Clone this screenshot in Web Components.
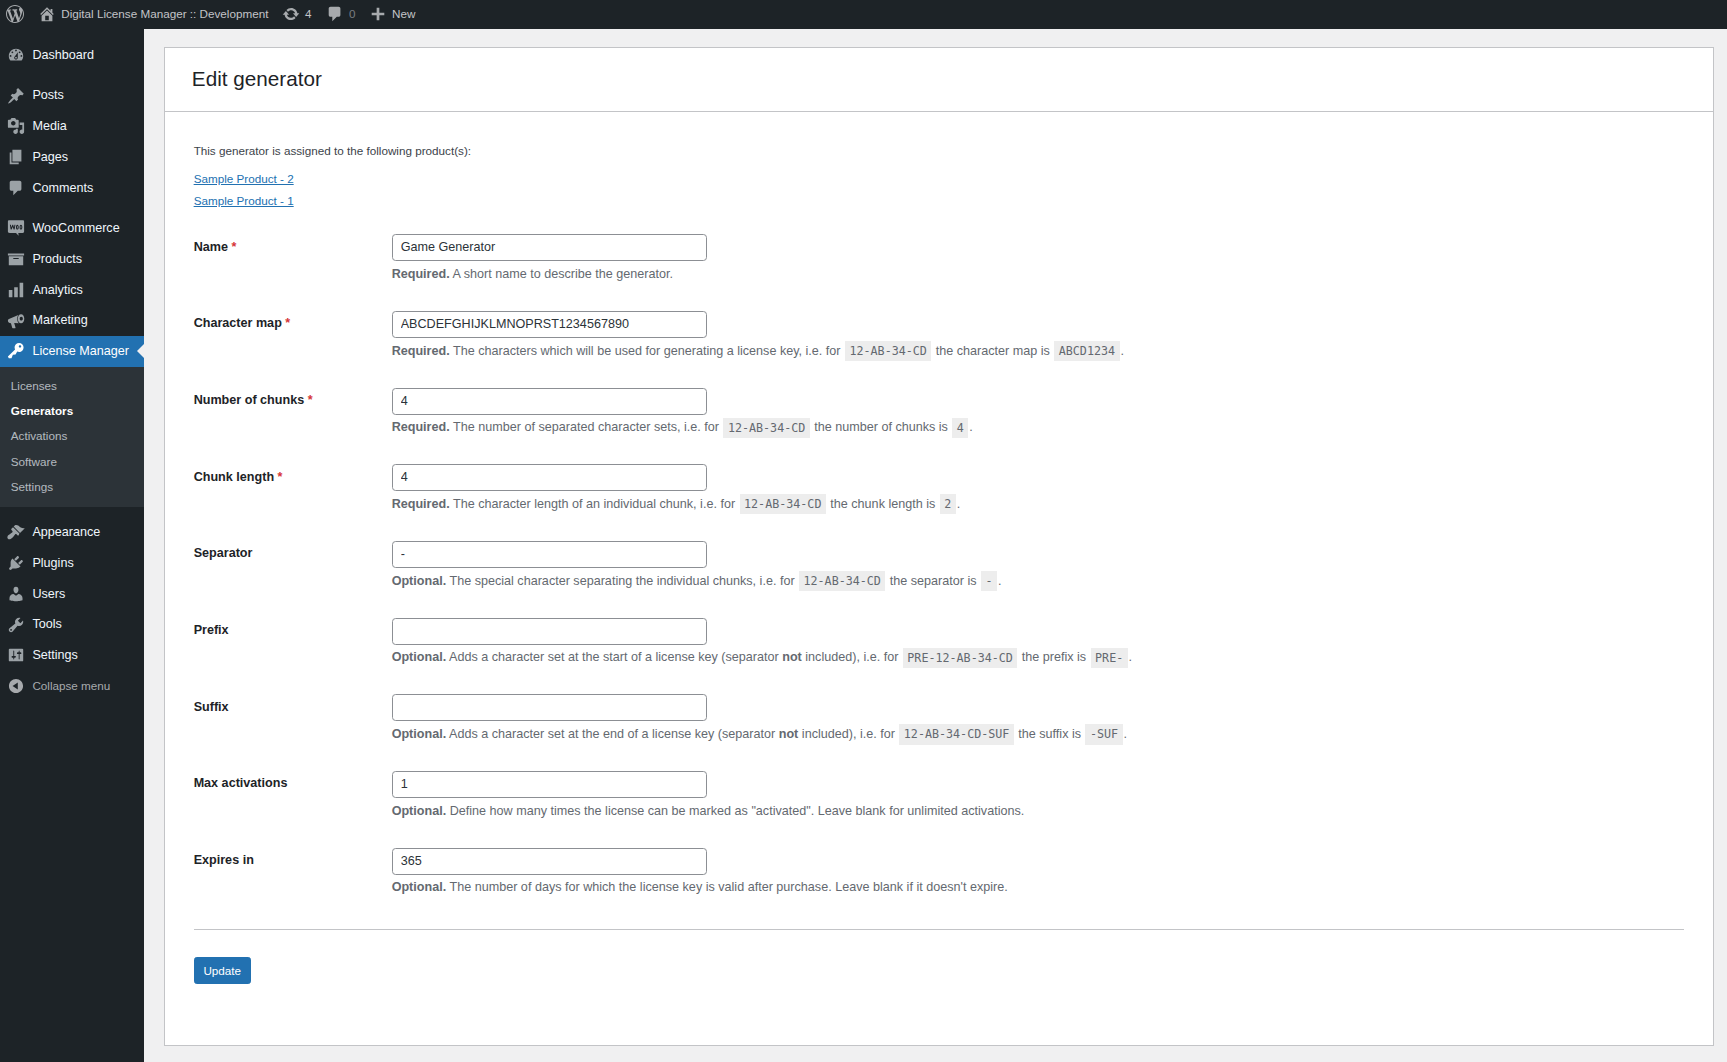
<!DOCTYPE html>
<html lang="en">
<head>
<meta charset="utf-8">
<title>Edit generator</title>
<style>
    body {
        margin: 0;
        background: #f0f0f1;
        font-family: "Liberation Sans", Arial, sans-serif;
        font-size: 11.7px;
        color: #3c434a;
    }
</style>
</head>
<body>
<wp-shell>
    <wp-admin-bar slot="bar" site="Digital License Manager :: Development" updates="4" comments="0"></wp-admin-bar>
    <wp-side-menu slot="menu">
        <wp-menu-item icon="dashboard">Dashboard</wp-menu-item>
        <wp-menu-sep></wp-menu-sep>
        <wp-menu-item icon="pin">Posts</wp-menu-item>
        <wp-menu-item icon="media">Media</wp-menu-item>
        <wp-menu-item icon="page">Pages</wp-menu-item>
        <wp-menu-item icon="comments">Comments</wp-menu-item>
        <wp-menu-sep></wp-menu-sep>
        <wp-menu-item icon="woo">WooCommerce</wp-menu-item>
        <wp-menu-item icon="archive">Products</wp-menu-item>
        <wp-menu-item icon="chart">Analytics</wp-menu-item>
        <wp-menu-item icon="megaphone">Marketing</wp-menu-item>
        <wp-menu-item icon="key" current>License Manager</wp-menu-item>
        <wp-sub-menu>
            <wp-sub-item>Licenses</wp-sub-item>
            <wp-sub-item current>Generators</wp-sub-item>
            <wp-sub-item>Activations</wp-sub-item>
            <wp-sub-item>Software</wp-sub-item>
            <wp-sub-item>Settings</wp-sub-item>
        </wp-sub-menu>
        <wp-menu-sep></wp-menu-sep>
        <wp-menu-item icon="appearance">Appearance</wp-menu-item>
        <wp-menu-item icon="plugins">Plugins</wp-menu-item>
        <wp-menu-item icon="users">Users</wp-menu-item>
        <wp-menu-item icon="tools">Tools</wp-menu-item>
        <wp-menu-item icon="settings">Settings</wp-menu-item>
        <wp-menu-item icon="collapse" small>Collapse menu</wp-menu-item>
    </wp-side-menu>

    <generator-card heading="Edit generator">
        <product-list>
            <a-link>Sample Product - 2</a-link>
            <a-link>Sample Product - 1</a-link>
        </product-list>

        <form-row label="Name" required value="Game Generator">
            <strong>Required.</strong> A short name to describe the generator.
        </form-row>
        <form-row label="Character map" required value="ABCDEFGHIJKLMNOPRST1234567890">
            <strong>Required.</strong> The characters which will be used for generating a license key, i.e. for <key-code>12-AB-34-CD</key-code> the character map is <key-code>ABCD1234</key-code>.
        </form-row>
        <form-row label="Number of chunks" required value="4">
            <strong>Required.</strong> The number of separated character sets, i.e. for <key-code>12-AB-34-CD</key-code> the number of chunks is <key-code>4</key-code>.
        </form-row>
        <form-row label="Chunk length" required value="4">
            <strong>Required.</strong> The character length of an individual chunk, i.e. for <key-code>12-AB-34-CD</key-code> the chunk length is <key-code>2</key-code>.
        </form-row>
        <form-row label="Separator" value="-">
            <strong>Optional.</strong> The special character separating the individual chunks, i.e. for <key-code>12-AB-34-CD</key-code> the separator is <key-code>-</key-code>.
        </form-row>
        <form-row label="Prefix" value="">
            <strong>Optional.</strong> Adds a character set at the start of a license key (separator <strong>not</strong> included), i.e. for <key-code>PRE-12-AB-34-CD</key-code> the prefix is <key-code>PRE-</key-code>.
        </form-row>
        <form-row label="Suffix" value="">
            <strong>Optional.</strong> Adds a character set at the end of a license key (separator <strong>not</strong> included), i.e. for <key-code>12-AB-34-CD-SUF</key-code> the suffix is <key-code>-SUF</key-code>.
        </form-row>
        <form-row label="Max activations" value="1">
            <strong>Optional.</strong> Define how many times the license can be marked as "activated". Leave blank for unlimited activations.
        </form-row>
        <form-row label="Expires in" value="365">
            <strong>Optional.</strong> The number of days for which the license key is valid after purchase. Leave blank if it doesn't expire.
        </form-row>

        <submit-bar>Update</submit-bar>
    </generator-card>
</wp-shell>

<script>
// dashicons, 20x20 box
const ICONS = {
    logo: 'M20 10c0-5.51-4.49-10-10-10C4.48 0 0 4.49 0 10c0 5.52 4.48 10 10 10 5.51 0 10-4.48 10-10zM7.78 15.37L4.37 6.22c.55-.02 1.17-.08 1.17-.08.5-.06.44-1.13-.06-1.11 0 0-1.45.11-2.37.11-.18 0-.37 0-.58-.01C4.12 2.69 6.87 1.11 10 1.11c2.33 0 4.45.87 6.05 2.34-.68-.11-1.65.39-1.65 1.58 0 .74.45 1.36.9 2.1.35.61.55 1.36.55 2.46 0 1.49-1.4 5-1.4 5l-3.03-8.37c.54-.02.82-.17.82-.17.5-.05.44-1.25-.06-1.22 0 0-1.44.12-2.38.12-.87 0-2.33-.12-2.33-.12-.5-.03-.56 1.2-.06 1.22l.92.08 1.26 3.41zM17.41 10c.24-.64.74-1.87.43-4.25.7 1.29 1.05 2.71 1.05 4.25 0 3.29-1.73 6.24-4.4 7.78.97-2.59 1.94-5.2 2.92-7.78zM6.1 18.09C3.12 16.65 1.11 13.53 1.11 10c0-1.3.23-2.48.72-3.59C3.25 10.3 4.67 14.2 6.1 18.09zm4.03-6.63l2.58 6.98c-.86.29-1.76.45-2.71.45-.79 0-1.57-.11-2.29-.33.81-2.38 1.62-4.74 2.42-7.1z',
    home: 'M16 8.5l1.53 1.53-1.06 1.06L10 4.62l-6.47 6.47-1.06-1.06L10 2.5l4 4v-2h2v4zm-6-2.46l6 5.99V18H4v-5.97zM12 17v-5H8v5h4z',
    update: 'M10.2 3.28c3.53 0 6.43 2.61 6.92 6h2.08l-3.5 4-3.5-4h2.32c-.45-1.97-2.21-3.45-4.32-3.45-1.45 0-2.73.71-3.54 1.78L4.95 5.66C6.23 4.2 8.11 3.28 10.2 3.28zm-.4 13.44c-3.52 0-6.43-2.61-6.92-6H.8l3.5-4c1.17 1.33 2.33 2.67 3.5 4H5.48c.45 1.97 2.21 3.45 4.32 3.45 1.45 0 2.73-.71 3.54-1.78l1.71 1.95c-1.28 1.46-3.15 2.38-5.25 2.38z',
    plus: 'M17 8.5v3h-5.5V17h-3v-5.5H3v-3h5.5V3h3v5.5H17z',
    dashboard: 'M3.76 16h12.48c1.1-1.37 1.76-3.11 1.76-5 0-4.42-3.58-8-8-8s-8 3.58-8 8c0 1.89.66 3.63 1.76 5zM10 4c.55 0 1 .45 1 1s-.45 1-1 1-1-.45-1-1 .45-1 1-1zM6 6c.55 0 1 .45 1 1s-.45 1-1 1-1-.45-1-1 .45-1 1-1zm8 0c.55 0 1 .45 1 1s-.45 1-1 1-1-.45-1-1 .45-1 1-1zm-5.37 5.55L12 7v6c0 1.1-.9 2-2 2s-2-.9-2-2c0-.57.24-1.08.63-1.45zM4 10c.55 0 1 .45 1 1s-.45 1-1 1-1-.45-1-1 .45-1 1-1zm12 0c.55 0 1 .45 1 1s-.45 1-1 1-1-.45-1-1 .45-1 1-1zm-5 3c0-.55-.45-1-1-1s-1 .45-1 1 .45 1 1 1 1-.45 1-1z',
    pin: 'M10.44 3.02l1.82-1.82 6.36 6.35-1.83 1.82c-1.05-.68-2.48-.57-3.41.36l-.75.75c-.92.93-1.04 2.35-.35 3.41l-1.83 1.82-2.41-2.41-2.8 2.79c-.42.42-3.38 2.71-3.8 2.29s1.86-3.39 2.28-3.81l2.79-2.79L4.1 9.36l1.83-1.82c1.05.69 2.48.57 3.41-.36l.75-.75c.93-.92 1.04-2.35.35-3.41z',
    media: 'M13 11V4c0-.55-.45-1-1-1h-1.67L9 1H5L3.67 3H2c-.55 0-1 .45-1 1v7c0 .55.45 1 1 1h10c.55 0 1-.45 1-1zM7 4.5c1.38 0 2.5 1.12 2.5 2.5S8.38 9.5 7 9.5 4.5 8.38 4.5 7 5.62 4.5 7 4.5zM14 6h5v10.5c0 1.38-1.12 2.5-2.5 2.5S14 17.88 14 16.5s1.12-2.5 2.5-2.5c.17 0 .34.02.5.05V9h-3V6zm-4 8.05V13h2v3.5c0 1.38-1.12 2.5-2.5 2.5S7 17.88 7 16.5 8.12 14 9.5 14c.17 0 .34.02.5.05z',
    page: 'M6 15V2h10v13H6zm-1 1h8v2H3V5h2v11z',
    comments: 'M5 2h9c1.1 0 2 .9 2 2v7c0 1.1-.9 2-2 2h-2l-5 5v-5H5c-1.1 0-2-.9-2-2V4c0-1.1.9-2 2-2z',
    archive: 'M19 4v2H1V4h18zM2 7h16v10H2V7zm11 3V9H7v1h6z',
    chart: 'M18 18V2h-4v16h4zm-6 0V7H8v11h4zm-6 0v-8H2v8h4z',
    megaphone: 'M1 9.5c0-.9.5-1.5 1.2-1.8L12.6 3.4c-.9 1.3-1.4 3-1.2 4.9.1 1.7.8 3.2 1.7 4.2L8 12.2l1.5 5.2c.1.3-.1.6-.4.6H6.4c-.3 0-.5-.2-.6-.5L4.4 12.6C2.4 12.6 1 11.4 1 9.5zM15.6 2.4c2.1 0 3.6 2.2 3.6 5s-1.5 5-3.6 5-3.6-2.2-3.6-5 1.5-5 3.6-5zm.3 3c-1.1 0-1.8.9-1.8 2s.7 2 1.8 2 1.7-.9 1.7-2-.6-2-1.7-2z',
    key: 'M16.95 2.58c1.96 1.95 1.96 5.12 0 7.07-1.51 1.51-3.75 1.84-5.59 1.01l-1.87 3.31-2.99.31L5 18H2l-1-2 7.95-7.69c-.92-1.87-.62-4.18.93-5.73 1.95-1.96 5.12-1.96 7.07 0zm-2.51 3.79c.74 0 1.33-.6 1.33-1.34 0-.73-.59-1.33-1.33-1.33-.73 0-1.33.6-1.33 1.33 0 .74.6 1.34 1.33 1.34z',
    appearance: 'M14.48 11.06L7.41 3.99l1.5-1.5c.5-.56 2.3-.47 3.51.32 1.21.8 1.43 1.28 2.91 2.1 1.18.64 2.45 1.26 4.45.85zm-.71.71L6.7 4.7 4.93 6.47c-.39.39-.39 1.02 0 1.41l1.06 1.06c.39.39.39 1.03 0 1.42-.6.6-1.43 1.11-2.21 1.69-.35.26-.7.53-1.01.84C1.43 13.23.4 14.84.4 15.91c0 .65.2 1.21.6 1.62.4.4.95.6 1.6.6 1.03 0 2.66-1.03 3.99-2.37.31-.31.58-.66.85-1.01.58-.78 1.09-1.61 1.69-2.21.39-.39 1.02-.39 1.41 0l1.06 1.06c.39.39 1.02.39 1.41 0z',
    plugins: 'M13.11 4.36L9.87 7.6 8 5.73l3.24-3.24c.35-.34 1.05-.2 1.56.32.52.51.66 1.21.31 1.55zm-8 1.77l.91-1.12 9.01 9.01-1.19.84c-.71.71-2.63 1.16-3.82 1.16H6.14L4.9 17.26c-.59.59-1.54.59-2.12 0-.59-.58-.59-1.53 0-2.12l1.24-1.24v-3.88c0-1.13.4-3.19 1.09-3.89zm7.26 3.97l3.24-3.24c.34-.35 1.04-.21 1.55.31.52.51.66 1.21.31 1.55l-3.24 3.25z',
    users: 'M10 9.25c-2.27 0-2.73-3.44-2.73-3.44C7 4.02 7.82 2 9.97 2c2.16 0 2.98 2.02 2.71 3.81 0 0-.41 3.44-2.68 3.44zm0 2.57L12.72 10c2.39 0 4.52 2.33 4.52 4.53v2.49s-3.65 1.13-7.24 1.13c-3.65 0-7.24-1.13-7.24-1.13v-2.49c0-2.25 1.94-4.48 4.47-4.48z',
    tools: 'M16.68 9.77c-1.34 1.34-3.3 1.67-4.95.99l-5.41 6.52c-.99.99-2.59.99-3.58 0s-.99-2.59 0-3.57l6.52-5.42c-.68-1.65-.35-3.61.99-4.95 1.28-1.28 3.12-1.62 4.72-1.06l-2.89 2.89 2.82 2.82 2.86-2.87c.53 1.58.18 3.39-1.08 4.65zM3.81 16.21c.4.39 1.04.39 1.43 0 .4-.4.4-1.04 0-1.43-.39-.4-1.03-.4-1.43 0-.39.39-.39 1.03 0 1.43z',
    settings: 'M18 16V4c0-.55-.45-1-1-1H3c-.55 0-1 .45-1 1v12c0 .55.45 1 1 1h14c.55 0 1-.45 1-1zM8 11h1c.55 0 1 .45 1 1s-.45 1-1 1H8v1.5c0 .28-.22.5-.5.5s-.5-.22-.5-.5V13H6c-.55 0-1-.45-1-1s.45-1 1-1h1V5.5c0-.28.22-.5.5-.5s.5.22.5.5V11zm5-2h-1c-.55 0-1-.45-1-1s.45-1 1-1h1V5.5c0-.28.22-.5.5-.5s.5.22.5.5V7h1c.55 0 1 .45 1 1s-.45 1-1 1h-1v5.5c0 .28-.22.5-.5.5s-.5-.22-.5-.5V9z',
    collapse: 'M10 2.16c4.33 0 7.84 3.51 7.84 7.84s-3.51 7.84-7.84 7.84S2.16 14.33 2.16 10 5.71 2.16 10 2.16zm2 11.72V6.12L6.18 9.97z',
    // speech bubble with the woo mark knocked out
    woo: 'M2.5 1.500h15c1 0 1.500.6 1.500 1.500v11c0 .9-.5 1.500-1.500 1.500h-5l.5 3-3-3h-7C1.500 15.500 1 14.900 1 14V3c0-.9.5-1.500 1.500-1.500zM3.200 6.500l.9 5.200h1l1.300-3 1 3h1l1-5.200H8.300l-.5 3-1-3H6l-1.200 3-.4-3zm8.300-.1c-1 0-1.500 1.200-1.500 2.700s.5 2.700 1.500 2.700 1.500-1.200 1.500-2.700-.5-2.700-1.500-2.700zm4 0c-1 0-1.500 1.200-1.500 2.700s.5 2.700 1.500 2.700 1.500-1.200 1.500-2.700-.5-2.700-1.500-2.700zm-4 1.300c.3 0 .4.600.4 1.400s-.1 1.400-.4 1.400-.4-.6-.4-1.400.1-1.400.4-1.400zm4 0c.3 0 .4.600.4 1.400s-.1 1.400-.4 1.400-.4-.6-.4-1.400.1-1.400.4-1.400z'
};

const iconSvg = (name) =>
    `<svg viewBox="0 0 20 20" width="18" height="18" fill="currentColor" fill-rule="evenodd" aria-hidden="true"><path d="${ICONS[name]}"/></svg>`;

function define(tag, css, html, init) {
    customElements.define(tag, class extends HTMLElement {
        constructor() {
            super();
            this.attachShadow({ mode: 'open' });
        }
        connectedCallback() {
            const markup = typeof html === 'function' ? html(this) : html;
            this.shadowRoot.innerHTML = `<style>${css}</style>${markup}`;
            if (init) init(this);
        }
    });
}

define('wp-shell', `
    :host { display: grid; grid-template-columns: 144px minmax(0, 1fr); grid-template-rows: 28.8px auto; }
    .bar { grid-column: 1 / -1; }
    .menu { display: block; background: #1d2327; }
    .main { display: block; padding: 18.54px 13.5px 16.6px 20.34px; min-width: 0; }
`, `
    <div class="bar"><slot name="bar"></slot></div>
    <div class="menu"><slot name="menu"></slot></div>
    <div class="main"><slot></slot></div>
`);

define('wp-admin-bar', `
    :host { display: flex; align-items: center; height: 28.8px; background: #1d2327; color: #c3c4c7; font-size: 11.7px; line-height: 28.8px; }
    .icon { display: flex; color: #a7aaad; }
    .logo { margin-left: 6.3px; }
    .home { margin-left: 13.5px; }
    .site { margin-left: 5.4px; }
    .updates { margin-left: 13.6px; }
    .count { margin-left: 5px; }
    .comments { margin-left: 14.4px; }
    .zero { opacity: .55; }
    .plus { margin-left: 14px; }
    .new { margin-left: 4.5px; }
`, (el) => `
    <span class="icon logo">${iconSvg('logo')}</span>
    <span class="icon home">${iconSvg('home')}</span>
    <span class="site">${el.getAttribute('site')}</span>
    <span class="icon updates">${iconSvg('update')}</span>
    <span class="count">${el.getAttribute('updates')}</span>
    <span class="icon comments">${iconSvg('comments')}</span>
    <span class="count zero">${el.getAttribute('comments')}</span>
    <span class="icon plus">${iconSvg('plus')}</span>
    <span class="new">New</span>
`);

define('wp-side-menu', `:host { display: block; padding: 10.8px 0; }`, `<slot></slot>`);

define('wp-menu-sep', `:host { display: block; height: 4.5px; margin-bottom: 5.4px; }`, ``);

define('wp-menu-item', `
    :host { display: flex; align-items: center; position: relative; height: 30.74px; font-size: 12.6px; line-height: 16.38px; color: #f0f6fc; }
    .image { display: flex; justify-content: center; width: 32.4px; flex: none; color: rgba(240, 246, 252, .6); }
    :host([current]) { background: #2271b1; color: #fff; }
    :host([current]) .image { color: #fff; }
    :host([current])::after {
        content: ""; position: absolute; right: 0; top: 50%; margin-top: -7.2px;
        border: 7.2px solid transparent; border-right-color: #f0f0f1; border-left-width: 0;
    }
    :host([small]) { font-size: 11.7px; color: #a7aaad; }
    :host([small]) .image { color: #a7aaad; }
`, (el) => `<span class="image">${iconSvg(el.getAttribute('icon'))}</span><slot></slot>`);

define('wp-sub-menu', `:host { display: block; background: #2c3338; padding: 6.5px 0 7px; }`, `<slot></slot>`);

define('wp-sub-item', `
    :host { display: block; padding: 4.5px 10.8px; font-size: 11.7px; line-height: 1.4; color: rgba(240, 246, 252, .7); }
    :host([current]) { color: #fff; font-weight: 600; }
`, `<slot></slot>`);

define('generator-card', `
    :host { display: block; background: #fff; border: 1px solid #c3c4c7; color: #3c434a; }
    header { display: flex; align-items: center; height: 63px; padding-left: 26.5px; border-bottom: 1px solid #c3c4c7; }
    h1 { margin: 0; font-size: 20.7px; font-weight: 400; line-height: 1.3; color: #1d2327; }
    .body { padding: 29.65px 28.8px 60.3px 28.3px; }
`, (el) => `
    <header><h1>${el.getAttribute('heading')}</h1></header>
    <div class="body"><slot></slot></div>
`);

define('product-list', `
    :host { display: block; font-size: 11.7px; line-height: 17.55px; margin-bottom: 10.98px; }
    p { margin: 0 0 10.5px; }
    ::slotted(a-link) { margin-top: 4.62px; }
`, `
    <p>This generator is assigned to the following product(s):</p>
    <slot></slot>
`);

define('a-link', `
    :host { display: block; color: #2271b1; text-decoration: underline; }
`, `<slot></slot>`);

define('form-row', `
    :host { display: grid; grid-template-columns: 198px minmax(0, 1fr); height: 76.68px; box-sizing: border-box; }
    label { padding-top: 18px; font-size: 12.6px; font-weight: 600; line-height: 1.3; color: #1d2327; }
    .req { color: #d63638; }
    .cell { padding-top: 13.5px; }
    input {
        display: block; box-sizing: border-box; width: 315px; height: 27px; margin: 0; padding: 0 8.1px 1px;
        border: 1px solid #8c8f94; border-radius: 3.6px; background: #fff; color: #2c3338;
        font-family: inherit; font-size: 12.6px; outline: none;
    }
    p { margin: 4.7px 0 0; font-size: 12.6px; line-height: 17.55px; color: #646970; white-space: nowrap; }
`, (el) => `
    <label>${el.getAttribute('label')}${el.hasAttribute('required') ? ' <span class="req">*</span>' : ''}</label>
    <div class="cell">
        <input type="text" value="${el.getAttribute('value')}">
        <p><slot></slot></p>
    </div>
`);

define('key-code', `
    :host {
        display: inline; padding: 2.7px 4.5px 3.6px; margin: 0 .9px; background: rgba(0, 0, 0, .07); color: inherit;
        font-family: "DejaVu Sans Mono", monospace; font-size: 11.7px; line-height: 1;
    }
`, `<slot></slot>`);

define('submit-bar', `
    :host { display: block; margin-top: 18.6px; padding-top: 27px; border-top: 1px solid #c3c4c7; }
    button {
        display: block; height: 27px; padding: 0 8.8px; border: 1px solid #2271b1; border-radius: 2.7px;
        background: #2271b1; color: #fff; font-family: inherit; font-size: 11.7px;
    }
`, `<button type="button"><slot></slot></button>`);
</script>
</body>
</html>
